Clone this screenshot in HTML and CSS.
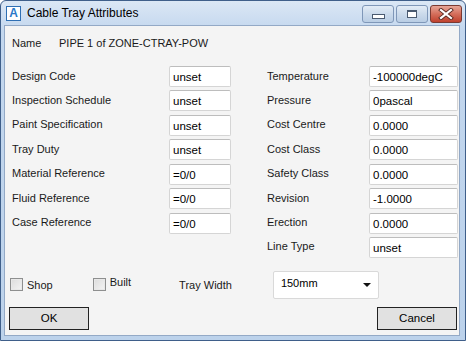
FILE: index.html
```html
<!DOCTYPE html>
<html lang="en">
<head>
  <meta charset="UTF-8" />
  <title>Cable Tray Attributes</title>
  <link rel="stylesheet" href="styles.css">
</head>
<body>
  <div class="ventana">
    <div class="titulo">
      <span class="logo">A</span>
      <span class="titulo-texto">Cable Tray Attributes</span>
      <div class="controles">
        <span class="ctl ctl-min"><span class="raya"></span></span>
        <span class="ctl ctl-max"><span class="caja"></span></span>
        <span class="ctl ctl-cerrar">
          <svg width="16" height="12" viewBox="0 0 16 12">
            <path d="M3 2 L13 10 M13 2 L3 10" stroke="#5a2a22" stroke-width="4" stroke-linecap="square" />
            <path d="M3 2 L13 10 M13 2 L3 10" stroke="#fff" stroke-width="2.2" stroke-linecap="square" />
          </svg>
        </span>
      </div>
    </div>

    <div class="cliente">
      <div class="nombre">
        <span class="nombre-label">Name</span>
        <span>PIPE 1 of ZONE-CTRAY-POW</span>
      </div>

      <div class="columnas">
        <div class="grupo izq">
          <span>Design Code</span><div class="campo">unset</div>
          <span>Inspection Schedule</span><div class="campo">unset</div>
          <span>Paint Specification</span><div class="campo">unset</div>
          <span>Tray Duty</span><div class="campo">unset</div>
          <span>Material Reference</span><div class="campo">=0/0</div>
          <span>Fluid Reference</span><div class="campo">=0/0</div>
          <span>Case Reference</span><div class="campo">=0/0</div>
        </div>
        <div class="grupo der">
          <span>Temperature</span><div class="campo">-100000degC</div>
          <span>Pressure</span><div class="campo">0pascal</div>
          <span>Cost Centre</span><div class="campo">0.0000</div>
          <span>Cost Class</span><div class="campo">0.0000</div>
          <span>Safety Class</span><div class="campo">0.0000</div>
          <span>Revision</span><div class="campo">-1.0000</div>
          <span>Erection</span><div class="campo">0.0000</div>
          <span>Line Type</span><div class="campo">unset</div>
        </div>
      </div>

      <div class="opciones">
        <label class="check"><span class="casilla"></span>Shop</label>
        <label class="check built"><span class="casilla"></span><span class="alto">Built</span></label>
        <span class="ancho-label">Tray Width</span>
        <div class="selector">
          <span>150mm</span>
          <span class="flecha"></span>
        </div>
      </div>

      <div class="botones">
        <div class="boton">OK</div>
        <div class="boton">Cancel</div>
      </div>
    </div>
  </div>
</body>
</html>
```

FILE: styles.css
```css
body {
  margin: 0;
  font-family: "Liberation Sans", Arial, sans-serif;
  background: #fff;
}

.ventana {
  width: 466px;
  height: 341px;
  box-sizing: border-box;
  border: 1px solid #3f5f8a;
  border-radius: 6px 6px 0 0;
  background: linear-gradient(#dbe7f5, #c3d7ee 30px, #bcd2eb);
  padding: 0 5px 4px 3px;
  display: flex;
  flex-direction: column;
}

/* Barra de titulo */
.titulo {
  height: 24px;
  display: flex;
  align-items: center;
  padding-left: 2px;
}

.logo {
  width: 13px;
  height: 13px;
  border: 1px solid #2f6fb3;
  background: #fff;
  color: #2b79c9;
  font-weight: bold;
  font-size: 12px;
  line-height: 13px;
  text-align: center;
  margin-right: 6px;
}

.titulo-texto {
  font-size: 12px;
  color: #000;
}

.controles {
  margin-left: auto;
  display: flex;
  gap: 2px;
  align-self: flex-start;
  margin-top: 4px;
  margin-right: -2px;
}

.ctl {
  width: 30px;
  height: 16px;
  border: 1px solid #7f97b8;
  border-radius: 3px;
  background: linear-gradient(#e3ecf6, #cbdaeb 50%, #b9cde4);
  display: flex;
  align-items: center;
  justify-content: center;
}

.ctl-cerrar {
  border-color: #7a3a32;
  background: linear-gradient(#e6a597, #d46e5b 50%, #c0412e);
}

.raya {
  width: 11px;
  height: 3px;
  border: 1px solid #4a5a70;
  background: #fff;
  margin-top: 5px;
}

.caja {
  width: 8px;
  height: 5px;
  border: 1px solid #4a5a70;
  border-top-width: 2px;
  background: #fff;
}

/* Area cliente */
.cliente {
  flex: 1;
  background: #f4f4f4;
  border: 1px solid #93a9c6;
  font-size: 11px;
  color: #1a1a1a;
  padding: 0 2px 0 4px;
  display: flex;
  flex-direction: column;
}

.nombre {
  display: flex;
  margin-top: 11px;
  padding-left: 3px;
}

.nombre-label {
  width: 47px;
}

.columnas {
  display: flex;
  margin-top: 17px;
}

.grupo {
  display: grid;
  grid-auto-rows: 21px;
  row-gap: 3.43px;
  align-items: center;
}

.izq {
  grid-template-columns: 157px 62px;
  padding-left: 3px;
}

.der {
  grid-template-columns: 102px 89px;
  margin-left: 36px;
}

.grupo span {
  margin-top: -2px;
}

.campo {
  height: 21px;
  box-sizing: border-box;
  background: #fff;
  border: 1px solid #d5d5d5;
  border-top-color: #bdbdbd;
  border-radius: 2px;
  padding-left: 3px;
  line-height: 20px;
  font-size: 11.5px;
  color: #000;
}

.opciones {
  display: flex;
  align-items: center;
  margin-top: 13px;
  padding-left: 1px;
  height: 28px;
}

.check {
  display: flex;
  align-items: center;
  gap: 4px;
}

.check.built {
  margin-left: 40px;
}

.alto {
  margin-bottom: 5px;
}

.casilla {
  width: 11px;
  height: 11px;
  border: 1px solid #8e8f8f;
  background: linear-gradient(135deg, #dcdcdc, #f4f4f4);
  box-shadow: inset 0 0 0 1px #e8e8e8;
}

.ancho-label {
  margin-left: 48px;
}

.selector {
  margin-left: 41px;
  width: 106px;
  height: 28px;
  box-sizing: border-box;
  border: 1px solid #d9d9d9;
  border-radius: 2px;
  background: #fff;
  display: flex;
  align-items: center;
  padding: 0 7px 3px 7px;
  color: #000;
}

.flecha {
  margin-left: auto;
  margin-top: 4px;
  border-left: 4px solid transparent;
  border-right: 4px solid transparent;
  border-top: 4px solid #111;
}

.botones {
  display: flex;
  justify-content: space-between;
  margin-top: 8px;
}

.boton {
  width: 80px;
  height: 23px;
  box-sizing: border-box;
  border: 1px solid #222;
  background: #e1e1e1;
  text-align: center;
  line-height: 20px;
  color: #000;
  font-size: 11.5px;
}
```
